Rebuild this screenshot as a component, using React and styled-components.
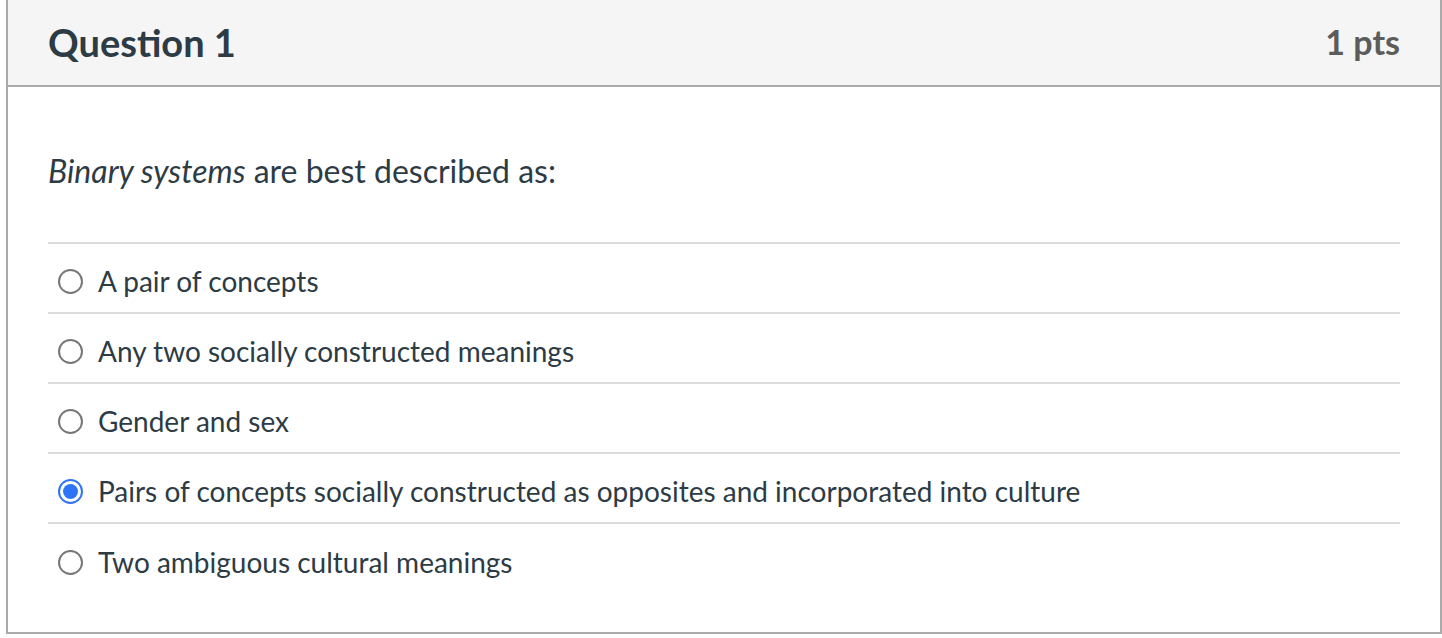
import React from "react";
import styled, { createGlobalStyle } from "styled-components";

const Global = createGlobalStyle`
  html, body { margin: 0; padding: 0; background: #fff; }
  body { font-family: Lato, "Noto Sans", sans-serif; color: #2d3b45; }
`;

const Panel = styled.section`
  margin-left: 6px;
  border: 2px solid #aaaaaa;
  border-top: none;
  background: #fff;
`;

const Header = styled.header`
  box-sizing: border-box;
  height: 87px;
  background: #f5f5f5;
  border-bottom: 2px solid #aaaaaa;
  padding: 0 40px 2px;
  display: flex;
  align-items: center;
  justify-content: space-between;
`;

const Title = styled.h2`
  margin: 0;
  font-size: 38px;
  line-height: 44px;
  font-weight: 700;
  color: #2d3b45;
`;

const Points = styled.span`
  font-size: 34px;
  line-height: 44px;
  font-weight: 700;
  color: #5c5c5c;
`;

const Body = styled.div`
  padding: 63px 40px 38px;
`;

const QuestionText = styled.p`
  margin: 0;
  font-size: 32px;
  line-height: 42px;
`;

const Answers = styled.ul`
  list-style: none;
  margin: 50px 0 0;
  padding: 0;
  border-top: 2px solid #dcdcdc;
`;

const Answer = styled.li`
  height: 70px;
  box-sizing: border-box;
  display: flex;
  align-items: center;
  padding: 5px 0 0 10px;
  border-bottom: 2px solid #dcdcdc;
  &:last-child { border-bottom: none; }
`;

const Radio = styled.span`
  width: 25px;
  height: 25px;
  box-sizing: border-box;
  border-radius: 50%;
  border: 2px solid ${p => (p.$checked ? "#2f74f6" : "#777777")};
  display: flex;
  align-items: center;
  justify-content: center;
  margin-right: 15px;
  margin-top: 2px;
  flex-shrink: 0;
  &::after {
    content: "";
    display: ${p => (p.$checked ? "block" : "none")};
    width: 15px;
    height: 15px;
    border-radius: 50%;
    background: #2f74f6;
  }
`;

const AnswerText = styled.span`
  font-size: 28px;
  line-height: 38px;
`;

const Em = styled.em`
  font-style: italic;
`;

const answers = [
  "A pair of concepts",
  "Any two socially constructed meanings",
  "Gender and sex",
  "Pairs of concepts socially constructed as opposites and incorporated into culture",
  "Two ambiguous cultural meanings",
];

export default function App() {
  return (
    <>
      <Global />
      <Panel>
        <Header>
          <Title>Question 1</Title>
          <Points>1 pts</Points>
        </Header>
        <Body>
          <QuestionText>
            <Em>Binary systems</Em> are best described as:
          </QuestionText>
          <Answers>
            {answers.map((a, i) => (
              <Answer key={a}>
                <Radio $checked={i === 3} />
                <AnswerText>{a}</AnswerText>
              </Answer>
            ))}
          </Answers>
        </Body>
      </Panel>
    </>
  );
}
